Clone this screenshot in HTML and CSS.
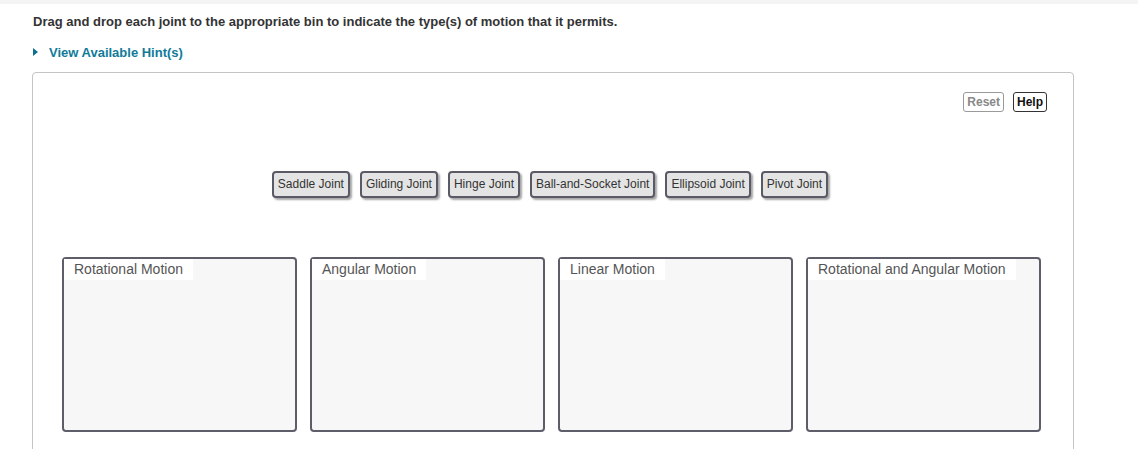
FILE: index.html
```html
<!DOCTYPE html>
<html>
<head>
<meta charset="utf-8">
<link rel="stylesheet" href="styles.css">
</head>
<body>
<div class="topband"></div>
<div class="content">
  <p class="prompt">Drag and drop each joint to the appropriate bin to indicate the type(s) of motion that it permits.</p>
  <div class="hint"><span class="tri"></span><span class="hint-text">View Available Hint(s)</span></div>
  <div class="panel">
    <div class="tools">
      <span class="tbtn reset">Reset</span>
      <span class="tbtn help">Help</span>
    </div>
    <div class="items">
      <span class="item">Saddle Joint</span>
      <span class="item">Gliding Joint</span>
      <span class="item">Hinge Joint</span>
      <span class="item">Ball-and-Socket Joint</span>
      <span class="item">Ellipsoid Joint</span>
      <span class="item">Pivot Joint</span>
    </div>
    <div class="bins">
      <div class="bin"><span class="label">Rotational Motion</span></div>
      <div class="bin"><span class="label">Angular Motion</span></div>
      <div class="bin"><span class="label">Linear Motion</span></div>
      <div class="bin"><span class="label">Rotational and Angular Motion</span></div>
    </div>
  </div>
</div>
</body>
</html>
```

FILE: styles.css
```css
html, body {
  margin: 0;
  padding: 0;
  background: #fff;
  font-family: "Liberation Sans", Arial, sans-serif;
  height: 449px;
  overflow: hidden;
}
.topband {
  height: 4px;
  background: #f4f4f4;
}
.content {
  padding-left: 32px;
}
.prompt {
  margin: 10px 0 0 1px;
  font-size: 13px;
  font-weight: bold;
  color: #333;
  line-height: 16px;
}
.hint {
  display: flex;
  align-items: center;
  margin-top: 14px;
  margin-left: 1px;
  height: 16px;
}
.tri {
  width: 0;
  height: 0;
  border-top: 4px solid transparent;
  border-bottom: 4px solid transparent;
  border-left: 5px solid #0f6f8f;
  margin-right: 11px;
}
.hint-text {
  font-size: 13px;
  font-weight: bold;
  color: #117a99;
}
.panel {
  margin-top: 12px;
  width: 1042px;
  height: 384px;
  border: 1px solid #c4c4c4;
  border-radius: 4px;
  box-sizing: border-box;
  padding: 0 29px;
}
.tools {
  display: flex;
  justify-content: flex-end;
  gap: 9px;
  margin-top: 19px;
  margin-right: -3px;
}
.tbtn {
  font-size: 12px;
  font-weight: bold;
  height: 20px;
  line-height: 18px;
  box-sizing: border-box;
  padding: 0 3px;
  border-radius: 3px;
  border: 1px solid #333;
  color: #111;
}
.tbtn.reset {
  color: #888;
  border-color: #9a9a9a;
}
.items {
  display: flex;
  justify-content: center;
  gap: 10px;
  margin-top: 59px;
  margin-left: -6px;
}
.item {
  font-size: 12px;
  color: #333;
  background: #e4e4e4;
  border: 2px solid #5a5a66;
  border-radius: 4px;
  height: 27px;
  line-height: 23px;
  box-sizing: border-box;
  padding: 0 4px;
  box-shadow: 2px 2px 2px rgba(0,0,0,0.35);
}
.bins {
  display: flex;
  gap: 13px;
  margin-top: 59px;
}
.bin {
  width: 235px;
  height: 175px;
  box-sizing: border-box;
  border: 2px solid #5e5e6a;
  border-radius: 4px;
  background: #f7f7f7;
  display: flex;
  align-items: flex-start;
}
.label {
  background: #fff;
  font-size: 14px;
  color: #555;
  padding: 2px 10px 3px 10px;
  line-height: 16px;
}
```
